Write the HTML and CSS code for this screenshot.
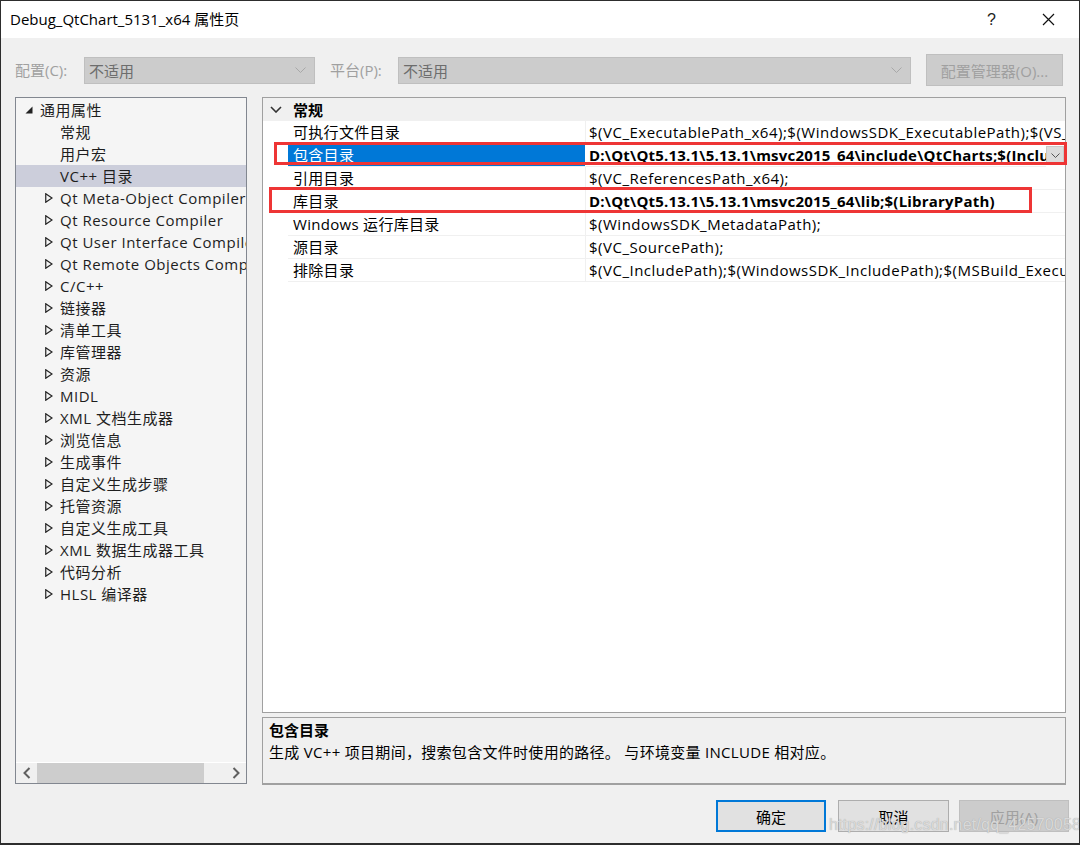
FILE: index.html
```html
<!DOCTYPE html>
<html>
<head>
<meta charset="utf-8">
<title>Debug_QtChart_5131_x64 属性页</title>
<link rel="stylesheet" href="styles.css">
</head>
<body>
<div class="dialog">
  <div class="titlebar">
    <span class="title">Debug_QtChart_5131_x64 属性页</span>
    <span class="help">?</span>
    <span class="close">
      <svg width="13" height="13" viewBox="0 0 13 13"><path d="M1 1L12 12M12 1L1 12" stroke="#111" stroke-width="1.2" fill="none"/></svg>
    </span>
  </div>

  <div class="toolbar">
    <span class="lbl lbl-config">配置(C):</span>
    <div class="combo combo-config">
      <span>不适用</span>
      <svg width="11" height="6" viewBox="0 0 11 6"><path d="M0.5 0.5L5.5 5.5L10.5 0.5" stroke="#a8a8a8" fill="none"/></svg>
    </div>
    <span class="lbl lbl-platform">平台(P):</span>
    <div class="combo combo-platform">
      <span>不适用</span>
      <svg width="11" height="6" viewBox="0 0 11 6"><path d="M0.5 0.5L5.5 5.5L10.5 0.5" stroke="#a8a8a8" fill="none"/></svg>
    </div>
    <div class="btn btn-disabled btn-manager">配置管理器(O)...</div>
  </div>

  <div class="main">
    <div class="tree">
      <div class="tree-list">
        <div class="node lvl0"><span class="twisty"><svg width="9" height="8" viewBox="0 0 9 8"><path d="M8.5 0.5V7.5H1.5Z" fill="#222"/></svg></span>通用属性</div>
        <div class="node lvl1 leaf">常规</div>
        <div class="node lvl1 leaf">用户宏</div>
        <div class="node lvl1 leaf selected">VC++ 目录</div>
        <div class="node lvl1"><span class="twisty"><svg width="8" height="10" viewBox="0 0 8 10"><path d="M0.75 0.75L7 5L0.75 9.25Z" stroke="#222" stroke-width="1.2" fill="none"/></svg></span>Qt Meta-Object Compiler</div>
        <div class="node lvl1"><span class="twisty"><svg width="8" height="10" viewBox="0 0 8 10"><path d="M0.75 0.75L7 5L0.75 9.25Z" stroke="#222" stroke-width="1.2" fill="none"/></svg></span>Qt Resource Compiler</div>
        <div class="node lvl1"><span class="twisty"><svg width="8" height="10" viewBox="0 0 8 10"><path d="M0.75 0.75L7 5L0.75 9.25Z" stroke="#222" stroke-width="1.2" fill="none"/></svg></span>Qt User Interface Compiler (uic)</div>
        <div class="node lvl1"><span class="twisty"><svg width="8" height="10" viewBox="0 0 8 10"><path d="M0.75 0.75L7 5L0.75 9.25Z" stroke="#222" stroke-width="1.2" fill="none"/></svg></span>Qt Remote Objects Compiler</div>
        <div class="node lvl1"><span class="twisty"><svg width="8" height="10" viewBox="0 0 8 10"><path d="M0.75 0.75L7 5L0.75 9.25Z" stroke="#222" stroke-width="1.2" fill="none"/></svg></span>C/C++</div>
        <div class="node lvl1"><span class="twisty"><svg width="8" height="10" viewBox="0 0 8 10"><path d="M0.75 0.75L7 5L0.75 9.25Z" stroke="#222" stroke-width="1.2" fill="none"/></svg></span>链接器</div>
        <div class="node lvl1"><span class="twisty"><svg width="8" height="10" viewBox="0 0 8 10"><path d="M0.75 0.75L7 5L0.75 9.25Z" stroke="#222" stroke-width="1.2" fill="none"/></svg></span>清单工具</div>
        <div class="node lvl1"><span class="twisty"><svg width="8" height="10" viewBox="0 0 8 10"><path d="M0.75 0.75L7 5L0.75 9.25Z" stroke="#222" stroke-width="1.2" fill="none"/></svg></span>库管理器</div>
        <div class="node lvl1"><span class="twisty"><svg width="8" height="10" viewBox="0 0 8 10"><path d="M0.75 0.75L7 5L0.75 9.25Z" stroke="#222" stroke-width="1.2" fill="none"/></svg></span>资源</div>
        <div class="node lvl1"><span class="twisty"><svg width="8" height="10" viewBox="0 0 8 10"><path d="M0.75 0.75L7 5L0.75 9.25Z" stroke="#222" stroke-width="1.2" fill="none"/></svg></span>MIDL</div>
        <div class="node lvl1"><span class="twisty"><svg width="8" height="10" viewBox="0 0 8 10"><path d="M0.75 0.75L7 5L0.75 9.25Z" stroke="#222" stroke-width="1.2" fill="none"/></svg></span>XML 文档生成器</div>
        <div class="node lvl1"><span class="twisty"><svg width="8" height="10" viewBox="0 0 8 10"><path d="M0.75 0.75L7 5L0.75 9.25Z" stroke="#222" stroke-width="1.2" fill="none"/></svg></span>浏览信息</div>
        <div class="node lvl1"><span class="twisty"><svg width="8" height="10" viewBox="0 0 8 10"><path d="M0.75 0.75L7 5L0.75 9.25Z" stroke="#222" stroke-width="1.2" fill="none"/></svg></span>生成事件</div>
        <div class="node lvl1"><span class="twisty"><svg width="8" height="10" viewBox="0 0 8 10"><path d="M0.75 0.75L7 5L0.75 9.25Z" stroke="#222" stroke-width="1.2" fill="none"/></svg></span>自定义生成步骤</div>
        <div class="node lvl1"><span class="twisty"><svg width="8" height="10" viewBox="0 0 8 10"><path d="M0.75 0.75L7 5L0.75 9.25Z" stroke="#222" stroke-width="1.2" fill="none"/></svg></span>托管资源</div>
        <div class="node lvl1"><span class="twisty"><svg width="8" height="10" viewBox="0 0 8 10"><path d="M0.75 0.75L7 5L0.75 9.25Z" stroke="#222" stroke-width="1.2" fill="none"/></svg></span>自定义生成工具</div>
        <div class="node lvl1"><span class="twisty"><svg width="8" height="10" viewBox="0 0 8 10"><path d="M0.75 0.75L7 5L0.75 9.25Z" stroke="#222" stroke-width="1.2" fill="none"/></svg></span>XML 数据生成器工具</div>
        <div class="node lvl1"><span class="twisty"><svg width="8" height="10" viewBox="0 0 8 10"><path d="M0.75 0.75L7 5L0.75 9.25Z" stroke="#222" stroke-width="1.2" fill="none"/></svg></span>代码分析</div>
        <div class="node lvl1"><span class="twisty"><svg width="8" height="10" viewBox="0 0 8 10"><path d="M0.75 0.75L7 5L0.75 9.25Z" stroke="#222" stroke-width="1.2" fill="none"/></svg></span>HLSL 编译器</div>
      </div>
      <div class="hscroll">
        <span class="sarrow"><svg width="8" height="12" viewBox="0 0 8 12"><path d="M6.5 1L1.5 6L6.5 11" stroke="#606060" stroke-width="2" fill="none"/></svg></span>
        <div class="track"><div class="thumb"></div></div>
        <span class="sarrow"><svg width="8" height="12" viewBox="0 0 8 12"><path d="M1.5 1L6.5 6L1.5 11" stroke="#606060" stroke-width="2" fill="none"/></svg></span>
      </div>
    </div>

    <div class="right">
      <div class="grid">
        <div class="cat">
          <span class="gutter"><svg width="12" height="7" viewBox="0 0 12 7"><path d="M1 1L6 6L11 1" stroke="#333" stroke-width="1.6" fill="none"/></svg></span>
          <span class="cat-name">常规</span>
        </div>
        <div class="prop">
          <span class="gutter"></span><span class="pname">可执行文件目录</span>
          <span class="pval">$(VC_ExecutablePath_x64);$(WindowsSDK_ExecutablePath);$(VS_ExecutablePath);$(MSBuild_ExecutablePath);$(FxCopDir);$(PATH);</span>
        </div>
        <div class="prop active">
          <span class="gutter"></span><span class="pname">包含目录</span>
          <span class="pval bold">D:\Qt\Qt5.13.1\5.13.1\msvc2015_64\include\QtCharts;$(IncludePath)</span>
          <span class="dropbtn"><svg width="9" height="5" viewBox="0 0 9 5"><path d="M0.5 0.5L4.5 4.5L8.5 0.5" stroke="#555" fill="none"/></svg></span>
        </div>
        <div class="prop">
          <span class="gutter"></span><span class="pname">引用目录</span>
          <span class="pval">$(VC_ReferencesPath_x64);</span>
        </div>
        <div class="prop">
          <span class="gutter"></span><span class="pname">库目录</span>
          <span class="pval bold">D:\Qt\Qt5.13.1\5.13.1\msvc2015_64\lib;$(LibraryPath)</span>
        </div>
        <div class="prop">
          <span class="gutter"></span><span class="pname">Windows 运行库目录</span>
          <span class="pval">$(WindowsSDK_MetadataPath);</span>
        </div>
        <div class="prop">
          <span class="gutter"></span><span class="pname">源目录</span>
          <span class="pval">$(VC_SourcePath);</span>
        </div>
        <div class="prop">
          <span class="gutter"></span><span class="pname">排除目录</span>
          <span class="pval">$(VC_IncludePath);$(WindowsSDK_IncludePath);$(MSBuild_ExecutablePath);$(VC_LibraryPath_x64);</span>
        </div>

        <div class="mark mark-include"></div>
        <div class="mark mark-lib"></div>
      </div>
      <div class="desc">
        <div class="desc-title">包含目录</div>
        <div class="desc-text">生成 VC++ 项目期间，搜索包含文件时使用的路径。 与环境变量 INCLUDE 相对应。</div>
      </div>
    </div>
  </div>

  <div class="footer">
    <div class="btn btn-ok">确定</div>
    <div class="btn btn-cancel">取消</div>
    <div class="btn btn-disabled btn-apply">应用(A)</div>
  </div>

  <div class="watermark">https://blog.csdn.net/qq_42570058</div>
</div>
</body>
</html>
```

FILE: styles.css
```css
* {
  box-sizing: border-box;
}

body {
  margin: 0;
  background: #2b2b2b;
}

.dialog {
  position: relative;
  width: 1080px;
  height: 845px;
  border: 1px solid #2d2d2d;
  border-bottom-width: 2px;
  background: #f0f0f0;
  font-family: "Open Sans", "Noto Sans CJK SC", sans-serif;
  font-size: 15px;
  color: #000;
  overflow: hidden;
}

/* title bar */
.titlebar {
  height: 37px;
  background: #fff;
  display: flex;
  align-items: center;
  padding-left: 9px;
}
.title {
  flex: 1;
  line-height: 20px;
  margin-top: -1px;
}
.help {
  width: 20px;
  margin-right: 35px;
  font-family: "Liberation Sans", sans-serif;
  font-size: 16px;
  color: #222;
}
.close {
  width: 13px;
  height: 13px;
  margin-right: 24px;
  display: flex;
}

/* config row */
.toolbar {
  display: flex;
  align-items: center;
  height: 32px;
  margin-top: 16px;
  padding-left: 14px;
}
.lbl {
  color: #a0a0a0;
  line-height: 20px;
}
.lbl-config {
  width: 69px;
}
.lbl-platform {
  width: 68px;
  margin-left: 15px;
}
.combo {
  height: 27px;
  background: #cccccc;
  border: 1px solid #bfbfbf;
  display: flex;
  align-items: center;
  justify-content: space-between;
  padding: 0 8px 0 4px;
  color: #6d6d6d;
}
.combo-config {
  width: 231px;
}
.combo-platform {
  width: 513px;
}

.btn {
  height: 32px;
  display: flex;
  align-items: center;
  justify-content: center;
  background: #e1e1e1;
  border: 1px solid #adadad;
}
.btn-disabled {
  background: #cccccc;
  border-color: #bfbfbf;
  color: #a0a0a0;
}
.btn-manager {
  width: 137px;
  margin-left: 15px;
}

/* main area */
.main {
  display: flex;
  margin-top: 11px;
  padding-left: 14px;
}

.tree {
  width: 232px;
  height: 687px;
  border: 1px solid #828790;
  background: #f5f5f5;
  display: flex;
  flex-direction: column;
}
.tree-list {
  flex: 1;
  padding-top: 1px;
  overflow: hidden;
}
.node {
  height: 22px;
  line-height: 22px;
  display: flex;
  align-items: center;
  white-space: nowrap;
  color: #1e1e1e;
  letter-spacing: 0.5px;
}
.node.selected {
  background: #cccedb;
}
.twisty {
  display: flex;
  align-items: center;
  flex-shrink: 0;
}
.lvl0 {
  padding-left: 8px;
}
.lvl0 .twisty {
  width: 16px;
}
.lvl1 {
  padding-left: 29px;
}
.lvl1 .twisty {
  width: 15px;
}
.lvl1.leaf {
  padding-left: 44px;
}

.hscroll {
  height: 21px;
  border-top: 1px solid #fff;
  background: #f0f0f0;
  display: flex;
  align-items: center;
}
.sarrow {
  width: 21px;
  height: 20px;
  display: flex;
  align-items: center;
  justify-content: center;
}
.track {
  flex: 1;
  height: 20px;
}
.thumb {
  width: 167px;
  height: 20px;
  background: #cdcdcd;
}

.right {
  width: 804px;
  margin-left: 15px;
  display: flex;
  flex-direction: column;
  gap: 4px;
}

/* property grid */
.grid {
  position: relative;
  height: 616px;
  border: 1px solid #a0a0a0;
  background: #fff;
}
.cat {
  height: 23px;
  display: flex;
  align-items: center;
  background: #f0f0f0;
}
.gutter {
  width: 25px;
  height: 100%;
  flex-shrink: 0;
  display: flex;
  align-items: center;
  justify-content: center;
  padding-left: 1px;
}
.cat-name {
  font-weight: bold;
  padding-left: 5px;
  line-height: 20px;
}
.prop {
  height: 23px;
  display: flex;
  align-items: stretch;
  white-space: nowrap;
}
.pname {
  width: 298px;
  flex-shrink: 0;
  padding-left: 5px;
  line-height: 22px;
  border-bottom: 1px solid #f0f0f0;
  border-right: 1px solid #f0f0f0;
  overflow: hidden;
  letter-spacing: 0.3px;
}
.pval {
  flex: 1;
  padding-left: 3px;
  line-height: 22px;
  border-bottom: 1px solid #f0f0f0;
  overflow: hidden;
  letter-spacing: 0.5px;
}
.pval.bold {
  font-weight: bold;
  letter-spacing: 0.2px;
}
.prop.active .pname {
  background: #0078d7;
  color: #fff;
  border-right-color: #fff;
}
.dropbtn {
  width: 18px;
  height: 18px;
  margin: 2px 1px 0 0;
  background: #dcdcdc;
  border: 1px solid #c8c8c8;
  display: flex;
  align-items: center;
  justify-content: center;
  flex-shrink: 0;
}

/* highlight boxes drawn over the grid */
.mark {
  position: absolute;
  border: 3px solid #ee3535;
}
.mark-include {
  left: 11px;
  top: 44px;
  width: 793px;
  height: 23px;
}
.mark-lib {
  left: 6px;
  top: 89px;
  width: 763px;
  height: 26px;
}

/* description */
.desc {
  height: 68px;
  border: 1px solid #a0a0a0;
  border-bottom: 2px solid #a0a0a0;
  padding: 1px 6px;
  line-height: 22px;
}
.desc-title {
  font-weight: bold;
}
.desc-text {
  letter-spacing: 0.3px;
}

/* buttons */
.footer {
  display: flex;
  justify-content: flex-end;
  margin-top: 15px;
  padding-right: 10px;
}
.btn-ok {
  width: 110px;
  border: 2px solid #0078d7;
}
.btn-cancel {
  width: 111px;
  margin-left: 12px;
}
.btn-apply {
  width: 110px;
  margin-left: 10px;
}

.watermark {
  position: absolute;
  left: 828px;
  top: 815px;
  font-family: "Liberation Sans", sans-serif;
  font-size: 16px;
  letter-spacing: 0.2px;
  color: rgba(225, 225, 225, 0.9);
  text-shadow: 0 0 1px #9a9a9a;
  white-space: nowrap;
  pointer-events: none;
}
```
